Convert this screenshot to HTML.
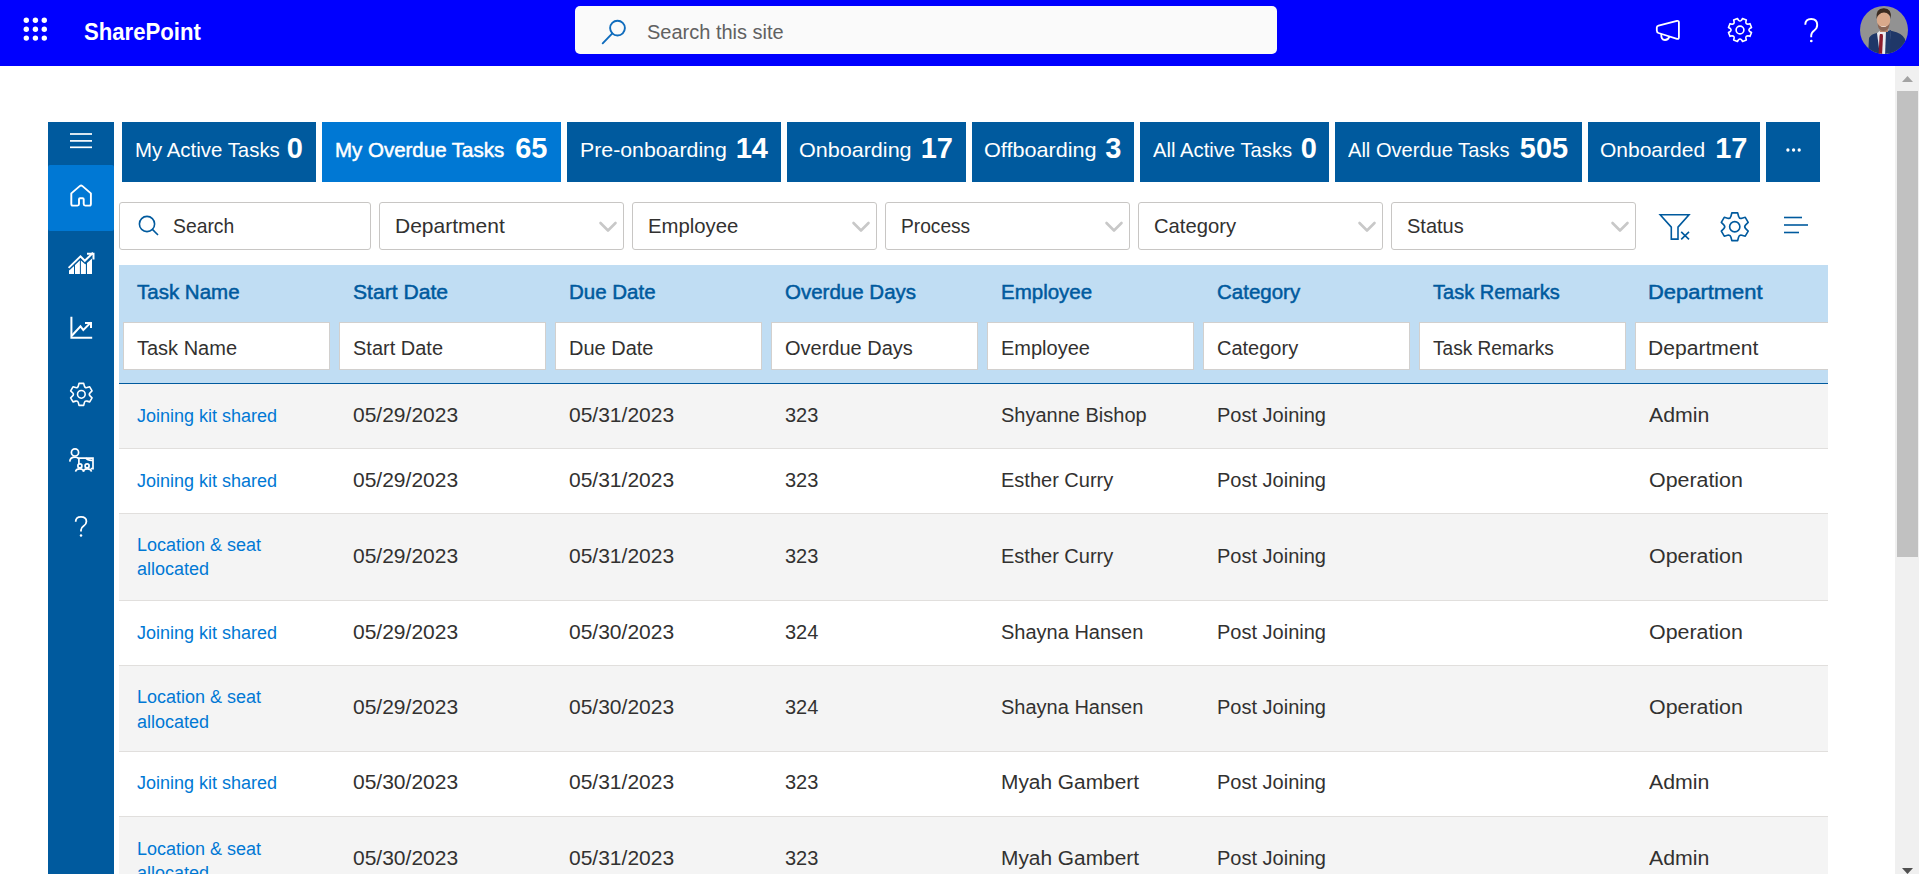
<!DOCTYPE html>
<html><head><meta charset="utf-8">
<style>
*{margin:0;padding:0;box-sizing:border-box}
html,body{width:1919px;height:874px;overflow:hidden;background:#fff;font-family:"Liberation Sans", sans-serif;}
.abs{position:absolute}
#top{position:absolute;left:0;top:0;width:1919px;height:66px;background:#0000ff}
#brand{position:absolute;left:84px;top:17px;font-size:23px;font-weight:bold;color:#fff;line-height:30px;transform:scaleX(0.963);transform-origin:left center}
#sbox{position:absolute;left:575px;top:6px;width:702px;height:48px;background:#fafafa;border-radius:5px}
#sbox span{position:absolute;left:72px;top:13.5px;font-size:20px;line-height:24px;color:#616161}
#nav{position:absolute;left:48px;top:122px;width:66px;height:752px;background:#005a9e}
#navhl{position:absolute;left:0;top:43px;width:66px;height:66px;background:#0078d4;border-radius:2px}
.tab{position:absolute;top:122px;height:60px;color:#fff}
.tab .tl{position:absolute;top:15.5px;font-size:21px;line-height:24px;white-space:nowrap;transform-origin:left center}
.tab .tn{position:absolute;top:10px;font-size:29px;line-height:32px;font-weight:bold}
.fb{position:absolute;top:202px;height:48px;border:1px solid #c8c6c4;border-radius:3px;background:#fff}
.fb span{position:absolute;transform-origin:left center;top:11px;font-size:21px;line-height:24px;color:#323130;white-space:nowrap}
.fb .sic{position:absolute;left:18px;top:12px}
.fb .chev{position:absolute;right:5px;top:18px}
#thead{position:absolute;left:119px;top:265px;width:1709px;height:119px;background:#c0ddf3;border-bottom:1px solid #005a9e}
.ht{position:absolute;transform-origin:left center;top:15px;font-size:20.5px;line-height:24px;font-weight:normal;-webkit-text-stroke:0.5px #005a9e;color:#005a9e;white-space:nowrap}
.hi{position:absolute;top:57px;height:48px;background:#fff;border:1px solid #d2d0ce}
.hi span{position:absolute;transform-origin:left center;left:13px;top:13px;font-size:20px;line-height:24px;color:#323130;white-space:nowrap}
.row{position:absolute;left:119px;width:1709px;border-bottom:1px solid #e1dfdd;box-sizing:content-box}
.cell{position:absolute;top:0;display:flex;align-items:center;white-space:nowrap}
.cell.lk span{font-size:18px;line-height:24.5px;color:#0078d4}
.cell.tx span{font-size:20px;line-height:24px;color:#323130;position:relative;top:-1px}
.cell.dt span{font-size:21px}
#sb{position:absolute;left:1895px;top:66px;width:24px;height:808px;background:#f0f0f0}
#thumb{position:absolute;left:2px;top:25px;width:21px;height:466px;background:#c1c1c1}
</style></head><body>
<div id="top">
 <svg class="abs" style="left:22px;top:16px" width="28" height="28" viewBox="0 0 28 28">
  <g fill="#fff"><circle cx="4.3" cy="4.3" r="2.7"/><circle cx="13.4" cy="4.3" r="2.7"/><circle cx="22.3" cy="4.3" r="2.7"/>
  <circle cx="4.3" cy="13.3" r="2.7"/><circle cx="13.4" cy="13.3" r="2.7"/><circle cx="22.3" cy="13.3" r="2.7"/>
  <circle cx="4.3" cy="22.1" r="2.7"/><circle cx="13.4" cy="22.1" r="2.7"/><circle cx="22.3" cy="22.1" r="2.7"/></g>
 </svg>
 <div id="brand">SharePoint</div>
 <div id="sbox">
  <svg class="abs" style="left:26px;top:13px" width="28" height="28" viewBox="0 0 28 28"><circle cx="16.5" cy="9.1" r="7.4" fill="none" stroke="#0f6cbd" stroke-width="1.9"/><line x1="11.3" y1="14.3" x2="1.7" y2="24.3" stroke="#0f6cbd" stroke-width="1.9" stroke-linecap="round"/></svg>
  <span>Search this site</span>
 </div>
 <!-- megaphone -->
 <svg class="abs" style="left:1650px;top:14px" width="40" height="32" viewBox="0 0 40 32">
  <path d="M8.5 11.6 L27 6.9 Q28.9 6.5 28.9 8.5 V23.3 Q28.9 25.3 27 24.8 L8.5 19 Q6.8 18.4 6.8 16.6 V13.5 Q6.8 12 8.5 11.6 Z" fill="none" stroke="#fff" stroke-width="1.8" stroke-linejoin="round"/>
  <path d="M11.3 20 Q10.9 26 15 26 Q18.2 26 19.6 22.4" fill="none" stroke="#fff" stroke-width="1.8"/>
 </svg>
 <!-- gear -->
 <svg class="abs" style="left:1724px;top:14px" width="32" height="32" viewBox="0 0 32 32" ><path d="M17.45 6.31 L18.55 4.48 L22.34 6.05 L21.83 8.12 Q21.80 10.20 23.88 10.17 L25.95 9.66 L27.52 13.45 L25.69 14.55 Q24.20 16.00 25.69 17.45 L27.52 18.55 L25.95 22.34 L23.88 21.83 Q21.80 21.80 21.83 23.88 L22.34 25.95 L18.55 27.52 L17.45 25.69 Q16.00 24.20 14.55 25.69 L13.45 27.52 L9.66 25.95 L10.17 23.88 Q10.20 21.80 8.12 21.83 L6.05 22.34 L4.48 18.55 L6.31 17.45 Q7.80 16.00 6.31 14.55 L4.48 13.45 L6.05 9.66 L8.12 10.17 Q10.20 10.20 10.17 8.12 L9.66 6.05 L13.45 4.48 L14.55 6.31 Q16.00 7.80 17.45 6.31 Z" fill="none" stroke="#fff" stroke-width="1.6" stroke-linejoin="round"/><circle cx="16" cy="16" r="3.9" fill="none" stroke="#fff" stroke-width="1.6"/></svg>
 <!-- help -->
 <svg class="abs" style="left:1800px;top:16px" width="24" height="28" viewBox="0 0 24 28">
  <path d="M5.3 8.8 Q5.2 3 11.2 3 Q17.2 3 17.2 9 Q17.2 12.2 14.2 14.4 Q11.2 16.5 11.2 19.5 V21.3" fill="none" stroke="#fff" stroke-width="1.9"/>
  <circle cx="11.3" cy="25" r="1.35" fill="#fff"/>
 </svg>
 <!-- avatar -->
 <svg class="abs" style="left:1860px;top:6px" width="48" height="48" viewBox="0 0 48 48">
  <defs><clipPath id="cc"><circle cx="24" cy="24" r="24"/></clipPath></defs>
  <g clip-path="url(#cc)">
   <rect width="48" height="48" fill="#929292"/>
   <path d="M9 32 Q11 28 17 27 L21 25 L27 24 L32 25 Q42 27 45 33 L46 44 L40 50 L8 50 Z" fill="#1f3768"/>
   <path d="M17 27 L21 24 L27 23 L31 25 L28 50 L20 50 Z" fill="#ecebef"/>
   <path d="M20 28 L22.5 28 L23 30 L22 50 L18.5 50 L19.5 30 Z" fill="#8c1b2c"/>
   <path d="M26 25 L31 24 L30 50 L25 50 Z" fill="#203a6d"/>
   <rect x="20" y="17" width="8" height="9" fill="#b9876d"/>
   <ellipse cx="23.5" cy="14" rx="6.7" ry="9" fill="#d9a98b"/>
   <path d="M17.5 17 Q18 25 23.5 25 Q29 25 29.8 17 Q28 21 23.5 21 Q19 21 17.5 17Z" fill="#8a6757"/>
   <path d="M20 19.5 Q23.5 21.5 27 19.5 Q23.5 22.5 20 19.5Z" fill="#fff"/>
   <path d="M16.5 13 Q15.5 2 24 2.3 Q32 2.5 31 13 Q30 7 24 6.5 Q18 7 16.5 13Z" fill="#3b2b21"/>
  </g>
 </svg>
</div>

<div id="nav">
 <div id="navhl"></div>
 <svg class="abs" style="left:22px;top:10px" width="22" height="22" viewBox="0 0 22 22"><g stroke="#fff" stroke-width="1.7"><line x1="0" y1="2" x2="22" y2="2"/><line x1="0" y1="8.9" x2="22" y2="8.9"/><line x1="0" y1="15.3" x2="22" y2="15.3"/></g></svg>
 <!-- home -->
 <svg class="abs" style="left:21px;top:60px" width="26" height="28" viewBox="0 0 26 28"><path d="M2.3 11.4 L11 3.9 Q12.1 3 13.2 3.9 L21.9 11.4 V22 Q21.9 23.6 20.3 23.6 H16.2 Q14.7 23.6 14.7 22.1 V17.2 Q14.7 16.2 13.7 16.2 H11 Q10 16.2 10 17.2 V22.1 Q10 23.6 8.5 23.6 H3.9 Q2.3 23.6 2.3 22 Z" fill="none" stroke="#fff" stroke-width="1.9" stroke-linejoin="round"/></svg>
 <!-- bar chart with arrow -->
 <svg class="abs" style="left:14px;top:123px" width="38" height="38" viewBox="0 0 38 38">
  <g fill="#fff"><path d="M7 28.9 V25.6 L12 21 V28.9 Z"/><path d="M13 28.9 V20 L17.9 15.2 V28.9 Z"/><path d="M18.9 28.9 V15.4 L23.9 19.6 V28.9 Z"/><path d="M25 28.9 V17.9 L30 13.6 V28.9 Z"/></g>
  <path d="M6.6 22.9 L18.5 11.3 L22.8 15.8 L31 7.8" fill="none" stroke="#005a9e" stroke-width="4.2"/>
  <path d="M6.6 22.9 L18.5 11.3 L22.8 15.8 L31 7.8" fill="none" stroke="#fff" stroke-width="2"/>
  <path d="M25 8.7 H31.5 V14.5" fill="none" stroke="#fff" stroke-width="2"/>
 </svg>
 <!-- line chart -->
 <svg class="abs" style="left:14px;top:187px" width="38" height="38" viewBox="0 0 38 38">
  <path d="M9.4 7.8 V28.7 H30.2" fill="none" stroke="#fff" stroke-width="2"/>
  <path d="M9.8 26.8 L18.5 17.4 L21.3 21 L29 13.4" fill="none" stroke="#fff" stroke-width="2"/>
  <path d="M23 13.9 H29 V19" fill="none" stroke="#fff" stroke-width="2"/>
 </svg>
 <!-- gear -->
 <svg class="abs" style="left:19.85px;top:258.55px" width="26.7" height="26.7" viewBox="0 0 32 32" ><path d="M12.37 6.04 L13.19 2.80 L18.81 2.80 L19.63 6.04 Q20.30 8.55 22.81 7.88 L26.03 6.97 L28.84 11.83 L26.44 14.16 Q24.60 16.00 26.44 17.84 L28.84 20.17 L26.03 25.03 L22.81 24.12 Q20.30 23.45 19.63 25.96 L18.81 29.20 L13.19 29.20 L12.37 25.96 Q11.70 23.45 9.19 24.12 L5.97 25.03 L3.16 20.17 L5.56 17.84 Q7.40 16.00 5.56 14.16 L3.16 11.83 L5.97 6.97 L9.19 7.88 Q11.70 8.55 12.37 6.04 Z" fill="none" stroke="#fff" stroke-width="1.9" stroke-linejoin="round"/><circle cx="16" cy="16" r="4.6" fill="none" stroke="#fff" stroke-width="1.9"/></svg>
 <!-- people -->
 <svg class="abs" style="left:14px;top:318px" width="38" height="38" viewBox="0 0 38 38">
  <g fill="none" stroke="#fff" stroke-width="1.7">
   <circle cx="13" cy="12.4" r="3.6"/>
   <path d="M7.8 21.6 Q8 17.2 13 17.2 Q15.5 17.2 16.9 19"/>
   <path d="M16.9 24.2 V18.1 H31 V28.6 H28.8"/>
   <path d="M23.6 18.1 Q25.5 20.6 30.8 20.3"/>
   <circle cx="17.9" cy="25.9" r="2"/><circle cx="25.1" cy="25.9" r="2"/>
   <path d="M13.6 31.6 Q14 28.9 17.9 28.9 Q21.5 28.9 21.4 31.6"/>
   <path d="M21.4 31.6 Q21.5 28.9 25.1 28.9 Q29 28.9 29.4 31.6"/>
  </g>
 </svg>
 <!-- help -->
 <svg class="abs" style="left:25px;top:392px" width="16" height="24" viewBox="0 0 16 24">
  <path d="M2.7 7.8 Q2.5 2.8 8 2.8 Q13.4 2.8 13.4 7.4 Q13.4 10 10.6 12 Q8 13.8 8 16 V17.6" fill="none" stroke="#fff" stroke-width="1.8"/>
  <circle cx="8" cy="21.4" r="1.25" fill="#fff"/>
 </svg>
</div>

<div class="tab" style="left:122px;width:194px;background:#005a9e"><span class="tl" style="left:12.5px;font-weight:normal;transform:scaleX(0.972)">My Active Tasks</span><span class="tn" style="right:13px">0</span></div><div class="tab" style="left:322px;width:239px;background:#0078d4"><span class="tl" style="left:13px;font-weight:normal;-webkit-text-stroke:0.5px #fff;transform:scaleX(0.975)">My Overdue Tasks</span><span class="tn" style="right:13.600000000000023px">65</span></div><div class="tab" style="left:567px;width:214px;background:#005a9e"><span class="tl" style="left:13px;font-weight:normal;transform:scaleX(1.014)">Pre-onboarding</span><span class="tn" style="right:13px">14</span></div><div class="tab" style="left:787px;width:179px;background:#005a9e"><span class="tl" style="left:12.200000000000045px;font-weight:normal;transform:scaleX(1.026)">Onboarding</span><span class="tn" style="right:13.100000000000023px">17</span></div><div class="tab" style="left:972px;width:162px;background:#005a9e"><span class="tl" style="left:11.799999999999955px;font-weight:normal;transform:scaleX(1.03)">Offboarding</span><span class="tn" style="right:12.599999999999909px">3</span></div><div class="tab" style="left:1140px;width:189px;background:#005a9e"><span class="tl" style="left:13px;font-weight:normal;transform:scaleX(0.964)">All Active Tasks</span><span class="tn" style="right:12px">0</span></div><div class="tab" style="left:1335px;width:247px;background:#005a9e"><span class="tl" style="left:13.400000000000091px;font-weight:normal;transform:scaleX(0.956)">All Overdue Tasks</span><span class="tn" style="right:13.799999999999955px">505</span></div><div class="tab" style="left:1588px;width:172px;background:#005a9e"><span class="tl" style="left:12px;font-weight:normal;transform:scaleX(1.0)">Onboarded</span><span class="tn" style="right:12.5px">17</span></div>
<div class="tab" style="left:1766px;width:54px;background:#005a9e"><svg class="abs" style="left:19px;top:25px" width="18" height="6" viewBox="0 0 18 6"><g fill="#fff"><circle cx="2.9" cy="3" r="1.65"/><circle cx="8.6" cy="3" r="1.65"/><circle cx="14.2" cy="3" r="1.65"/></g></svg></div>

<div class="fb" style="left:119px;width:252px"><svg class="sic" width="22" height="22" viewBox="0 0 22 22"><circle cx="9" cy="9" r="7.6" fill="none" stroke="#005a9e" stroke-width="1.6"/><line x1="14.4" y1="14.4" x2="20" y2="20" stroke="#005a9e" stroke-width="1.6"/></svg><span style="left:53px;transform:scaleX(0.92)">Search</span></div><div class="fb" style="left:379px;width:245px"><span style="left:15px;transform:scaleX(1.0)">Department</span><svg class="chev" width="20" height="12" viewBox="0 0 20 12"><polyline points="2.5,2 10,9.5 17.5,2" fill="none" stroke="#c8c8c8" stroke-width="2.6" stroke-linecap="round" stroke-linejoin="round"/></svg></div><div class="fb" style="left:632px;width:245px"><span style="left:15px;transform:scaleX(0.967)">Employee</span><svg class="chev" width="20" height="12" viewBox="0 0 20 12"><polyline points="2.5,2 10,9.5 17.5,2" fill="none" stroke="#c8c8c8" stroke-width="2.6" stroke-linecap="round" stroke-linejoin="round"/></svg></div><div class="fb" style="left:885px;width:245px"><span style="left:15px;transform:scaleX(0.912)">Process</span><svg class="chev" width="20" height="12" viewBox="0 0 20 12"><polyline points="2.5,2 10,9.5 17.5,2" fill="none" stroke="#c8c8c8" stroke-width="2.6" stroke-linecap="round" stroke-linejoin="round"/></svg></div><div class="fb" style="left:1138px;width:245px"><span style="left:15px;transform:scaleX(0.963)">Category</span><svg class="chev" width="20" height="12" viewBox="0 0 20 12"><polyline points="2.5,2 10,9.5 17.5,2" fill="none" stroke="#c8c8c8" stroke-width="2.6" stroke-linecap="round" stroke-linejoin="round"/></svg></div><div class="fb" style="left:1391px;width:245px"><span style="left:15px;transform:scaleX(0.953)">Status</span><svg class="chev" width="20" height="12" viewBox="0 0 20 12"><polyline points="2.5,2 10,9.5 17.5,2" fill="none" stroke="#c8c8c8" stroke-width="2.6" stroke-linecap="round" stroke-linejoin="round"/></svg></div>
<!-- filter clear -->
<svg class="abs" style="left:1658px;top:212px" width="34" height="30" viewBox="0 0 34 30">
 <path d="M2.2 2.7 H31 L20 15.1 V27.1 H13.3 V15.1 Z" fill="none" stroke="#005a9e" stroke-width="1.6" stroke-linejoin="miter"/>
 <path d="M23.2 19.8 L31 27.3 M31 19.8 L23.2 27.3" stroke="#005a9e" stroke-width="1.6"/>
</svg>
<svg class="abs" style="left:1717.95px;top:210.25px" width="33.5" height="33.5" viewBox="0 0 32 32" ><path d="M12.37 6.04 L13.19 2.80 L18.81 2.80 L19.63 6.04 Q20.30 8.55 22.81 7.88 L26.03 6.97 L28.84 11.83 L26.44 14.16 Q24.60 16.00 26.44 17.84 L28.84 20.17 L26.03 25.03 L22.81 24.12 Q20.30 23.45 19.63 25.96 L18.81 29.20 L13.19 29.20 L12.37 25.96 Q11.70 23.45 9.19 24.12 L5.97 25.03 L3.16 20.17 L5.56 17.84 Q7.40 16.00 5.56 14.16 L3.16 11.83 L5.97 6.97 L9.19 7.88 Q11.70 8.55 12.37 6.04 Z" fill="none" stroke="#005a9e" stroke-width="1.55" stroke-linejoin="round"/><circle cx="16" cy="16" r="4.9" fill="none" stroke="#005a9e" stroke-width="1.55"/></svg>
<svg class="abs" style="left:1783px;top:214px" width="27" height="22" viewBox="0 0 27 22">
 <g stroke="#005a9e" stroke-width="1.6"><line x1="1" y1="3.5" x2="19" y2="3.5"/><line x1="1" y1="11" x2="25" y2="11"/><line x1="1" y1="18.5" x2="16" y2="18.5"/></g>
</svg>

<div id="thead"><span class="ht" style="left:18px;transform:scaleX(1)">Task Name</span><div class="hi" style="left:4px;width:207px;"><span style="left:13px;transform:scaleX(1)">Task Name</span></div><span class="ht" style="left:234px;transform:scaleX(1.03)">Start Date</span><div class="hi" style="left:220px;width:207px;"><span style="left:13px;transform:scaleX(1)">Start Date</span></div><span class="ht" style="left:450px;transform:scaleX(1)">Due Date</span><div class="hi" style="left:436px;width:207px;"><span style="left:13px;transform:scaleX(1)">Due Date</span></div><span class="ht" style="left:666px;transform:scaleX(1)">Overdue Days</span><div class="hi" style="left:652px;width:207px;"><span style="left:13px;transform:scaleX(1)">Overdue Days</span></div><span class="ht" style="left:882px;transform:scaleX(1)">Employee</span><div class="hi" style="left:868px;width:207px;"><span style="left:13px;transform:scaleX(1)">Employee</span></div><span class="ht" style="left:1098px;transform:scaleX(1)">Category</span><div class="hi" style="left:1084px;width:207px;"><span style="left:13px;transform:scaleX(1)">Category</span></div><span class="ht" style="left:1314px;transform:scaleX(0.976)">Task Remarks</span><div class="hi" style="left:1300px;width:207px;"><span style="left:13px;transform:scaleX(0.953)">Task Remarks</span></div><span class="ht" style="left:1528.5px;transform:scaleX(1.07)">Department</span><div class="hi" style="left:1516px;width:193px;border-right:none;"><span style="left:11.5px;transform:scaleX(1.055)">Department</span></div></div>
<div class="row" style="top:384px;height:64px;background:#f4f4f4"><div class="cell lk" style="left:18px;top:0px;height:64px"><span>Joining kit shared</span></div><div class="cell tx dt" style="left:234px;top:0px;height:64px"><span>05/29/2023</span></div><div class="cell tx dt" style="left:450px;top:0px;height:64px"><span>05/31/2023</span></div><div class="cell tx" style="left:666px;top:0px;height:64px"><span>323</span></div><div class="cell tx" style="left:882px;top:0px;height:64px"><span>Shyanne Bishop</span></div><div class="cell tx" style="left:1098px;top:0px;height:64px"><span>Post Joining</span></div><div class="cell tx" style="left:1530px;top:0px;height:64px"><span style="display:inline-block;transform:scaleX(1.064);transform-origin:left center">Admin</span></div></div><div class="row" style="top:449px;height:64px;background:#ffffff"><div class="cell lk" style="left:18px;top:0px;height:64px"><span>Joining kit shared</span></div><div class="cell tx dt" style="left:234px;top:0px;height:64px"><span>05/29/2023</span></div><div class="cell tx dt" style="left:450px;top:0px;height:64px"><span>05/31/2023</span></div><div class="cell tx" style="left:666px;top:0px;height:64px"><span>323</span></div><div class="cell tx" style="left:882px;top:0px;height:64px"><span>Esther Curry</span></div><div class="cell tx" style="left:1098px;top:0px;height:64px"><span>Post Joining</span></div><div class="cell tx" style="left:1530px;top:0px;height:64px"><span style="display:inline-block;transform:scaleX(1.069);transform-origin:left center">Operation</span></div></div><div class="row" style="top:514px;height:86px;background:#f4f4f4"><div class="cell lk" style="left:18px;top:0px;height:86px"><span>Location &amp; seat<br>allocated</span></div><div class="cell tx dt" style="left:234px;top:0px;height:86px"><span>05/29/2023</span></div><div class="cell tx dt" style="left:450px;top:0px;height:86px"><span>05/31/2023</span></div><div class="cell tx" style="left:666px;top:0px;height:86px"><span>323</span></div><div class="cell tx" style="left:882px;top:0px;height:86px"><span>Esther Curry</span></div><div class="cell tx" style="left:1098px;top:0px;height:86px"><span>Post Joining</span></div><div class="cell tx" style="left:1530px;top:0px;height:86px"><span style="display:inline-block;transform:scaleX(1.069);transform-origin:left center">Operation</span></div></div><div class="row" style="top:601px;height:64px;background:#ffffff"><div class="cell lk" style="left:18px;top:0px;height:64px"><span>Joining kit shared</span></div><div class="cell tx dt" style="left:234px;top:0px;height:64px"><span>05/29/2023</span></div><div class="cell tx dt" style="left:450px;top:0px;height:64px"><span>05/30/2023</span></div><div class="cell tx" style="left:666px;top:0px;height:64px"><span>324</span></div><div class="cell tx" style="left:882px;top:0px;height:64px"><span>Shayna Hansen</span></div><div class="cell tx" style="left:1098px;top:0px;height:64px"><span>Post Joining</span></div><div class="cell tx" style="left:1530px;top:0px;height:64px"><span style="display:inline-block;transform:scaleX(1.069);transform-origin:left center">Operation</span></div></div><div class="row" style="top:666px;height:85px;background:#f4f4f4"><div class="cell lk" style="left:18px;top:1px;height:85px"><span>Location &amp; seat<br>allocated</span></div><div class="cell tx dt" style="left:234px;top:-1px;height:85px"><span>05/29/2023</span></div><div class="cell tx dt" style="left:450px;top:-1px;height:85px"><span>05/30/2023</span></div><div class="cell tx" style="left:666px;top:-1px;height:85px"><span>324</span></div><div class="cell tx" style="left:882px;top:-1px;height:85px"><span>Shayna Hansen</span></div><div class="cell tx" style="left:1098px;top:-1px;height:85px"><span>Post Joining</span></div><div class="cell tx" style="left:1530px;top:-1px;height:85px"><span style="display:inline-block;transform:scaleX(1.069);transform-origin:left center">Operation</span></div></div><div class="row" style="top:752px;height:64px;background:#ffffff"><div class="cell lk" style="left:18px;top:-1px;height:64px"><span>Joining kit shared</span></div><div class="cell tx dt" style="left:234px;top:-1px;height:64px"><span>05/30/2023</span></div><div class="cell tx dt" style="left:450px;top:-1px;height:64px"><span>05/31/2023</span></div><div class="cell tx" style="left:666px;top:-1px;height:64px"><span>323</span></div><div class="cell tx" style="left:882px;top:-1px;height:64px"><span style="display:inline-block;transform:scaleX(1.044);transform-origin:left center">Myah Gambert</span></div><div class="cell tx" style="left:1098px;top:-1px;height:64px"><span>Post Joining</span></div><div class="cell tx" style="left:1530px;top:-1px;height:64px"><span style="display:inline-block;transform:scaleX(1.064);transform-origin:left center">Admin</span></div></div><div class="row" style="top:817px;height:86px;background:#f4f4f4"><div class="cell lk" style="left:18px;top:1px;height:86px"><span>Location &amp; seat<br>allocated</span></div><div class="cell tx dt" style="left:234px;top:-1px;height:86px"><span>05/30/2023</span></div><div class="cell tx dt" style="left:450px;top:-1px;height:86px"><span>05/31/2023</span></div><div class="cell tx" style="left:666px;top:-1px;height:86px"><span>323</span></div><div class="cell tx" style="left:882px;top:-1px;height:86px"><span style="display:inline-block;transform:scaleX(1.044);transform-origin:left center">Myah Gambert</span></div><div class="cell tx" style="left:1098px;top:-1px;height:86px"><span>Post Joining</span></div><div class="cell tx" style="left:1530px;top:-1px;height:86px"><span style="display:inline-block;transform:scaleX(1.064);transform-origin:left center">Admin</span></div></div>

<div id="sb"><div id="thumb"></div>
 <svg class="abs" style="left:7px;top:10px" width="11" height="6" viewBox="0 0 11 6"><path d="M0 6 L5.5 0 L11 6Z" fill="#a3a3a3"/></svg>
 <svg class="abs" style="left:7px;top:802px" width="11" height="6" viewBox="0 0 11 6"><path d="M0 0 L5.5 6 L11 0Z" fill="#505050"/></svg>
</div>
</body></html>
